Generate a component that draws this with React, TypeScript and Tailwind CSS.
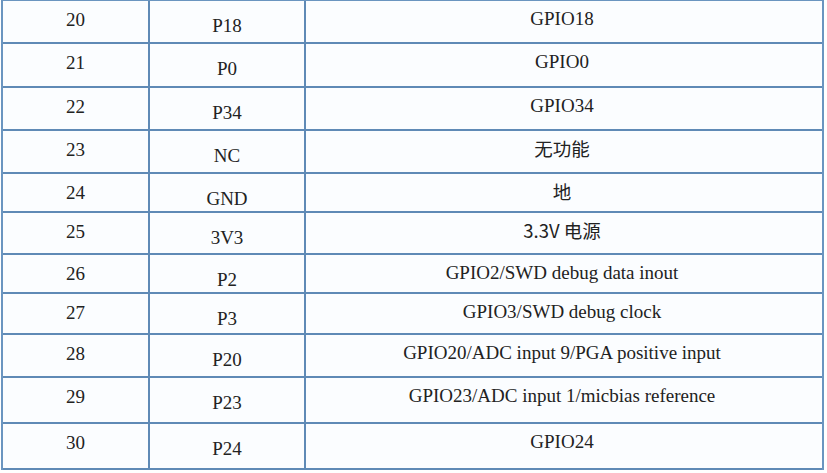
const rows = [
  { n: "20", pin: "P18", desc: "GPIO18", h: "h-[43px]" },
  { n: "21", pin: "P0", desc: "GPIO0", h: "h-[44px]" },
  { n: "22", pin: "P34", desc: "GPIO34", h: "h-[43px]" },
  { n: "23", pin: "NC", desc: "无功能", h: "h-[43px]", cjk: true },
  { n: "24", pin: "GND", desc: "地", h: "h-[39px]", cjk: true },
  { n: "25", pin: "3V3", desc: "3.3V 电源", h: "h-[42px]", cjk: true },
  { n: "26", pin: "P2", desc: "GPIO2/SWD debug data inout", h: "h-[39px]" },
  { n: "27", pin: "P3", desc: "GPIO3/SWD debug clock", h: "h-[41px]" },
  { n: "28", pin: "P20", desc: "GPIO20/ADC input 9/PGA positive input", h: "h-[43px]" },
  { n: "29", pin: "P23", desc: "GPIO23/ADC input 1/micbias reference", h: "h-[46px]" },
  { n: "30", pin: "P24", desc: "GPIO24", h: "h-[46px]" },
];

export default function App() {
  return (
    <div className="h-[473px] w-[827px] overflow-hidden bg-white font-['Liberation_Serif','Times_New_Roman',serif] text-[19px] leading-[20px] text-[#222]">
      <div className="ml-[1px] w-[823px] border-x-[2px] border-t border-[#6a95c0] bg-[#fbfdff]">
        {rows.map((r) => (
          <div key={r.n} className={`flex border-b-[2px] border-[#5f8ab6] ${r.h}`}>
            <div className="w-[147px] shrink-0 border-r-[2px] border-[#5f8ab6] pt-[9px] text-center">
              {r.n}
            </div>
            <div className="w-[156px] shrink-0 border-r-[2px] border-[#5f8ab6] pt-[15px] text-center">
              {r.pin}
            </div>
            <div
              className={
                r.cjk
                  ? "flex-1 pt-[7px] pr-[4px] text-center font-['Noto_Sans_CJK_SC','Noto_Sans',sans-serif] text-[18.5px]"
                  : "flex-1 pt-[8px] pr-[4px] text-center"
              }
            >
              {r.desc}
            </div>
          </div>
        ))}
      </div>
    </div>
  );
}
